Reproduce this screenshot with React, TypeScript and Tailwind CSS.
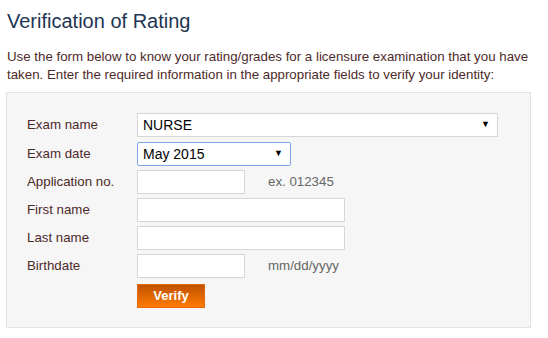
import { ReactNode } from "react";

const font = { fontFamily: '"Liberation Sans", Arial, sans-serif' };

function Row({ label, children }: { label: string; children: ReactNode }) {
  return (
    <div className="flex items-center h-[24px]">
      <div className="w-[110px] text-[13.3px] text-[#4d2a2a]">{label}</div>
      {children}
    </div>
  );
}

function FakeSelect({ value, width, focused = false }: { value: string; width: string; focused?: boolean }) {
  return (
    <div
      className={`flex items-center justify-between h-[24px] bg-white pl-[5px] pr-[7px] text-[14px] text-black ${width} ${
        focused ? "border border-[#7da7e6] rounded-[2px]" : "border border-[#d6d6d6]"
      }`}
    >
      <span>{value}</span>
      <span className="text-[9px] text-black">▼</span>
    </div>
  );
}

function TextBox({ width }: { width: string }) {
  return <div className={`h-[24px] bg-white border border-[#d6d6d6] ${width}`} />;
}

export default function App() {
  return (
    <div className="w-[548px] h-[338px] bg-white pl-[6px] pt-[7px]" style={font}>
      <h1 className="pl-[1px] text-[20px] leading-[28px] text-[#1d3553]">Verification of Rating</h1>
      <p className="mt-[13px] pl-[1px] text-[13.3px] leading-[18px] text-[#4d2a2a]">
        Use the form below to know your rating/grades for a licensure examination that you have
        <br />
        taken. Enter the required information in the appropriate fields to verify your identity:
      </p>
      <div className="mt-[8px] w-[525px] border border-[#e3e3e3] bg-[#f6f6f6] pt-[20px] pb-[19px] pl-[20px]">
        <div className="flex flex-col">
          <Row label="Exam name">
            <FakeSelect value="NURSE" width="w-[361px]" />
          </Row>
          <div className="mt-[5px]">
            <Row label="Exam date">
              <FakeSelect value="May 2015" width="w-[154px]" focused />
            </Row>
          </div>
          <div className="mt-[4px]">
            <Row label="Application no.">
              <TextBox width="w-[108px]" />
              <span className="ml-[23px] text-[13.3px] text-[#666]">ex. 012345</span>
            </Row>
          </div>
          <div className="mt-[4px]">
            <Row label="First name">
              <TextBox width="w-[208px]" />
            </Row>
          </div>
          <div className="mt-[4px]">
            <Row label="Last name">
              <TextBox width="w-[208px]" />
            </Row>
          </div>
          <div className="mt-[4px]">
            <Row label="Birthdate">
              <TextBox width="w-[108px]" />
              <span className="ml-[23px] text-[13.3px] text-[#666]">mm/dd/yyyy</span>
            </Row>
          </div>
          <div className="mt-[5px] pl-[110px]">
            <button className="w-[68px] h-[24px] border border-[#e36a0c] bg-gradient-to-b from-[#bf5200] to-[#ff7b00] text-white text-[13px] font-bold">
              Verify
            </button>
          </div>
        </div>
      </div>
    </div>
  );
}
